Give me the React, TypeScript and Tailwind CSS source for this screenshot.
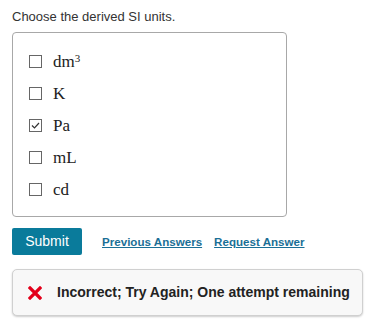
import React, { useState } from 'react'

const options = [
  { id: 'dm3', label: 'dm', sup: '3' },
  { id: 'K', label: 'K' },
  { id: 'Pa', label: 'Pa' },
  { id: 'mL', label: 'mL' },
  { id: 'cd', label: 'cd' },
]

export default function App() {
  const [checked, setChecked] = useState<Record<string, boolean>>({ Pa: true })

  return (
    <div className="w-[373px] h-[325px] bg-white px-3 pt-[8px] font-['Liberation_Sans',Arial,sans-serif] text-[#333]">
      <p className="text-[13px] leading-[17px]">Choose the derived SI units.</p>

      {/* Options */}
      <div className="mt-[7px] w-[275px] h-[185px] border border-[#a8a8a8] rounded-[4px] pl-4 pt-[12px]">
        {options.map((o) => (
          <label key={o.id} className="flex items-center h-[32px] cursor-pointer">
            <span
              className="w-[13px] h-[13px] border border-[#666] bg-white flex items-center justify-center"
              onClick={() => setChecked((p) => ({ ...p, [o.id]: !p[o.id] }))}
            >
              {checked[o.id] && (
                <svg width="9" height="9" viewBox="0 0 9 9">
                  <path d="M1 4.5 L3.5 7 L8 2" fill="none" stroke="#333" strokeWidth="1.2" />
                </svg>
              )}
            </span>
            <span className="ml-[11px] font-['Liberation_Serif','Times_New_Roman',serif] text-[17px] leading-none text-[#222]">
              {o.label}
              {o.sup && <span className="text-[11px] align-top relative top-[0px]">{o.sup}</span>}
            </span>
          </label>
        ))}
      </div>

      {/* Actions */}
      <div className="flex items-center mt-[11px]">
        <button className="w-[70px] h-[27px] bg-[#0a7b9b] text-white text-[14px] rounded-[2px]">Submit</button>
        <a href="#" className="ml-5 text-[11.6px] text-[#1a6f96] underline font-bold">Previous Answers</a>
        <a href="#" className="ml-3 text-[11.6px] text-[#1a6f96] underline font-bold">Request Answer</a>
      </div>

      <div className="mt-[14px] w-[351px] h-[47px] bg-[#f8f8f8] border border-[#d0d0d0] rounded-[5px] shadow-[0_1px_2px_rgba(0,0,0,0.2)] flex items-center pl-[15px]">
        <svg width="14" height="14" viewBox="0 0 14 14">
          <path d="M2 2 L12 12 M12 2 L2 12" stroke="#e3001b" strokeWidth="3.2" strokeLinecap="square" />
        </svg>
        <span className="ml-[15px] text-[14px] font-bold text-[#222]">Incorrect; Try Again; One attempt remaining</span>
      </div>
    </div>
  )
}
